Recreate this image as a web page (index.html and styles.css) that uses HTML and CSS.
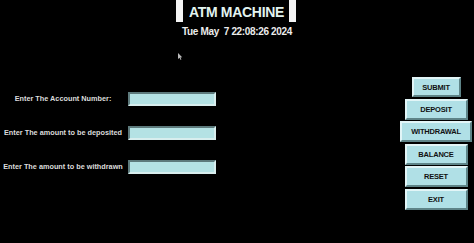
FILE: index.html
```html
<!DOCTYPE html>
<html>
<head>
<meta charset="utf-8">
<link rel="stylesheet" href="styles.css">
</head>
<body>
<div class="app">
  <header class="head">
    <div class="title">
      <span class="bar"></span>
      <h1 class="title-text">ATM MACHINE</h1>
      <span class="bar"></span>
    </div>
    <div class="date">Tue May  7 22:08:26 2024</div>
  </header>
  <main class="main">
    <div class="form">
      <label class="lbl">Enter The Account Number:</label>
      <input class="entry" type="text">
      <label class="lbl">Enter The amount to be deposited</label>
      <input class="entry" type="text">
      <label class="lbl">Enter The amount to be withdrawn</label>
      <input class="entry" type="text">
    </div>
    <div class="buttons">
      <button class="btn btn-submit">SUBMIT</button>
      <button class="btn">DEPOSIT</button>
      <button class="btn btn-wide">WITHDRAWAL</button>
      <button class="btn">BALANCE</button>
      <button class="btn">RESET</button>
      <button class="btn">EXIT</button>
    </div>
  </main>
  <svg class="cursor" width="5" height="8" viewBox="0 0 5 8"><path d="M0 0 L0 6 L1.5 4.8 L2.6 7 L3.4 6.6 L2.4 4.4 L4.2 4.3 Z" fill="#bbb"/></svg>
</div>
</body>
</html>
```
FILE: styles.css
```css
html, body {
  margin: 0;
  padding: 0;
  background: #000;
}
.app {
  position: relative;
  width: 474px;
  height: 243px;
  background: #000;
  font-family: "Liberation Sans", Arial, sans-serif;
  font-weight: bold;
  overflow: hidden;
}
.head {
  display: flex;
  flex-direction: column;
  align-items: center;
}
.title {
  display: flex;
  align-items: stretch;
  height: 22px;
  margin-left: -2px;
}
.bar {
  width: 7px;
  background: #f4f4f4;
}
.title-text {
  margin: 0;
  padding: 0 5px 0 6px;
  font-size: 14px;
  line-height: 24px;
  color: #e2f4f0;
  letter-spacing: -0.3px;
}
.date {
  margin-top: 3px;
  font-size: 10px;
  line-height: 14px;
  color: #ececec;
  white-space: pre;
  letter-spacing: -0.35px;
}
.main {
  display: flex;
  justify-content: space-between;
  align-items: flex-start;
  padding-top: 38px;
}
.form {
  display: grid;
  grid-template-columns: 124px 88px;
  column-gap: 3px;
  row-gap: 20px;
  margin-top: 15px;
  padding-left: 1px;
}
.lbl {
  font-size: 7.3px;
  line-height: 14px;
  color: #dcdcdc;
  text-align: center;
  white-space: nowrap;
}
.entry {
  box-sizing: border-box;
  width: 88px;
  height: 14px;
  margin: 0;
  padding: 0;
  background: #b4e2e4;
  border: 2px solid;
  border-color: #5d7a7c #d8eeee #d8eeee #5d7a7c;
  outline: none;
}
.buttons {
  display: flex;
  flex-direction: column;
  align-items: center;
  gap: 1.5px;
  width: 72px;
  margin-right: 2px;
}
.btn {
  box-sizing: border-box;
  width: 63px;
  height: 21px;
  margin: 0;
  padding: 0;
  background: #b0e0e6;
  border: 2px solid;
  border-color: #e2f5f7 #5e8488 #5e8488 #e2f5f7;
  font-family: "Liberation Sans", Arial, sans-serif;
  font-weight: bold;
  font-size: 7.5px;
  color: #111;
  letter-spacing: -0.2px;
}
.btn-submit {
  width: 49px;
  height: 20px;
}
.btn-wide {
  width: 72px;
}
.cursor {
  position: absolute;
  left: 178px;
  top: 53px;
}
```
